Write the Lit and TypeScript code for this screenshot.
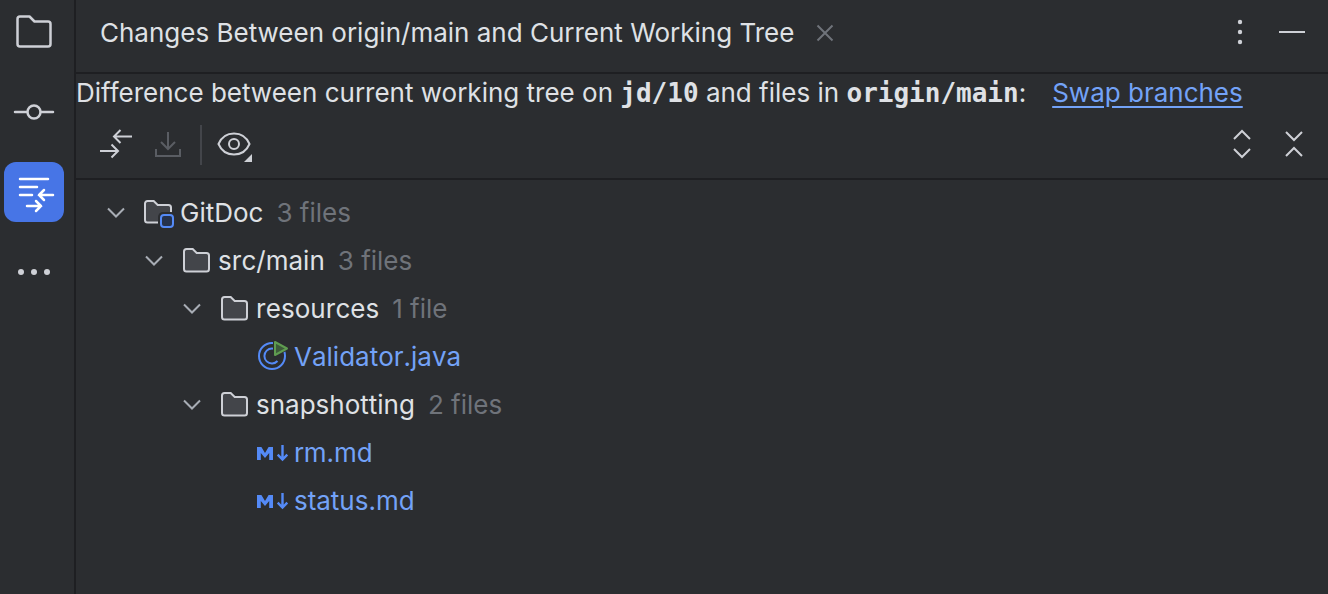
import { LitElement, html, css, svg } from "lit";
import { customElement } from "lit/decorators.js";

type Row = {
  depth: number;
  icon: "module" | "folder" | "java" | "md";
  name: string;
  count?: string;
  changed?: boolean;
};

const rows: Row[] = [
  { depth: 0, icon: "module", name: "GitDoc", count: "3 files" },
  { depth: 1, icon: "folder", name: "src/main", count: "3 files" },
  { depth: 2, icon: "folder", name: "resources", count: "1 file" },
  { depth: 3, icon: "java", name: "Validator.java", changed: true },
  { depth: 2, icon: "folder", name: "snapshotting", count: "2 files" },
  { depth: 3, icon: "md", name: "rm.md", changed: true },
  { depth: 3, icon: "md", name: "status.md", changed: true },
];

const treeIcons = {
  module: svg`
    <path d="M1 6.500A2.500 2.500 0 0 1 3.500 4h6.200l4 4h10.800A2.500 2.500 0 0 1 27 10.500V23a2.500 2.500 0 0 1-2.500 2.500h-21A2.500 2.500 0 0 1 1 23Z" fill="#43454a" stroke="#ced0d6" stroke-width="2"/>
    <rect x="14" y="15" width="18" height="18" rx="5" fill="#2b2d30"/>
    <rect x="17" y="18" width="12" height="12" rx="3" fill="#25324d" stroke="#548af7" stroke-width="2"/>`,
  folder: svg`
    <path d="M2 6.500A2.500 2.500 0 0 1 4.500 4h6.200l4 4h9.800A2.500 2.500 0 0 1 27 10.500V24a2.500 2.500 0 0 1-2.500 2.500h-20A2.500 2.500 0 0 1 2 24Z" fill="#43454a" stroke="#ced0d6" stroke-width="2"/>`,
  java: svg`
    <circle cx="14" cy="15" r="13" fill="none" stroke="#548af7" stroke-width="2"/>
    <path d="M19.500 20a7.500 7.500 0 1 1 0-10" fill="none" stroke="#548af7" stroke-width="2"/>
    <path d="M15 -2 32 8 15 17Z" fill="#2b2d30"/>
    <path d="M17 1v13l12-6.500Z" fill="#3d5a3a" stroke="#5f9c50" stroke-width="2" stroke-linejoin="round"/>`,
  md: svg`
    <path d="M-1 23V10h4.400L7 16l3.600-6H15v13h-3.800v-7L7 21l-4.200-5v7Z" fill="#548af7"/>
    <path d="M24.500 8V22.500M19.700 17.700l4.800 4.800 4.800-4.800" fill="none" stroke="#548af7" stroke-width="2.400"/>`,
};

@customElement("app-root")
export class AppRoot extends LitElement {
  static override styles = css`
    :host {
      display: flex;
      width: 1328px;
      height: 594px;
      overflow: hidden;
      background: #2b2d30;
      color: #dfe1e5;
      font-family: Inter, "Liberation Sans", sans-serif;
      font-size: 26px;
    }

    svg {
      display: block;
      flex: none;
      overflow: visible;
    }

    .sidebar {
      width: 76px;
      flex: none;
      box-sizing: border-box;
      padding: 2px 0 0 4px;
      display: flex;
      flex-direction: column;
      gap: 20px;
      border-right: 2px solid #1e1f22;
    }

    .side-btn {
      width: 60px;
      height: 60px;
      border-radius: 12px;
      display: flex;
      align-items: center;
      justify-content: center;
    }

    .side-btn.active {
      background: #4775e6;
    }

    .main {
      flex: 1;
      min-width: 0;
      display: flex;
      flex-direction: column;
    }

    .header {
      height: 72px;
      flex: none;
      display: flex;
      align-items: center;
      padding: 0 23px 8px 24px;
      box-sizing: border-box;
    }

    .title {
      white-space: nowrap;
    }

    .close {
      margin: 2px 0 0 21px;
    }

    .spacer {
      flex: 1;
    }

    .more {
      margin-right: 36px;
    }

    .rule {
      height: 2px;
      flex: none;
      background: #1e1f22;
    }

    .notice {
      height: 38px;
      flex: none;
      line-height: 38px;
      white-space: pre;
    }

    .notice b {
      font-family: "DejaVu Sans Mono", "Liberation Mono", monospace;
      font-weight: 700;
    }

    .notice a {
      color: #73a2f7;
      text-decoration: underline;
      text-underline-offset: 4px;
      margin-left: 26px;
    }

    .toolbar {
      height: 66px;
      flex: none;
      display: flex;
      align-items: center;
      padding: 0 14px 0 20px;
      box-sizing: border-box;
    }

    .tool {
      width: 40px;
      height: 40px;
      display: flex;
      align-items: center;
      justify-content: center;
    }

    .tool + .tool {
      margin-left: 12px;
    }

    .sep {
      width: 2px;
      height: 40px;
      background: #43454a;
      margin: 0 12px;
    }

    .tree {
      padding-top: 9px;
      font-kerning: none;
    }

    .row {
      height: 48px;
      display: flex;
      align-items: center;
      white-space: nowrap;
    }

    .chevron {
      width: 24px;
      flex: none;
      margin-right: 16px;
    }

    .row-icon {
      margin-right: 4px;
    }

    .label {
      margin-bottom: 1px;
    }

    .changed {
      color: #73a2f7;
    }

    .count {
      color: #6f737a;
      margin-left: 13px;
    }
  `;

  private renderRow(row: Row) {
    return html`
      <div class="row" style="padding-left: ${28 + row.depth * 38}px">
        <div class="chevron">
          ${row.changed
            ? ""
            : html`<svg width="24" height="24" viewBox="0 0 24 24" fill="none" stroke="#a8adb5" stroke-width="2">
                <path d="M4 7.500l8 8 8-8" />
              </svg>`}
        </div>
        <svg class="row-icon" width="32" height="32" viewBox="0 0 32 32">${treeIcons[row.icon]}</svg>
        <span class="label ${row.changed ? "changed" : ""}">${row.name}</span>
        ${row.count ? html`<span class="label count">${row.count}</span>` : ""}
      </div>
    `;
  }

  override render() {
    return html`
      <nav class="sidebar">
        <div class="side-btn">
          <svg width="40" height="40" viewBox="0 0 40 40" fill="none" stroke="#ced0d6" stroke-width="2.500">
            <path d="M3.500 7A2.500 2.500 0 0 1 6 4.500h9.500l5 5H34a2.500 2.500 0 0 1 2.500 2.500v20a2.500 2.500 0 0 1-2.500 2.500H6A2.500 2.500 0 0 1 3.500 32Z" stroke-linejoin="round" />
          </svg>
        </div>
        <div class="side-btn">
          <svg width="40" height="40" viewBox="0 0 40 40" fill="none" stroke="#ced0d6" stroke-width="2.500">
            <circle cx="20" cy="20" r="6.500" />
            <path d="M1 20h12M27 20h12" stroke-linecap="round" />
          </svg>
        </div>
        <div class="side-btn active">
          <svg width="40" height="40" viewBox="0 0 40 40" fill="none" stroke="#fff" stroke-width="2.500" stroke-linecap="round">
            <path d="M6 7h28M6 15h17M6 23h12" />
            <path d="M39 23H25M30 18l-5 5 5 5" />
            <path d="M13 34h14M22 29l5 5-5 5" />
          </svg>
        </div>
        <div class="side-btn">
          <svg width="40" height="12" viewBox="0 0 40 12" fill="#ced0d6">
            <circle cx="7" cy="6" r="3" />
            <circle cx="20" cy="6" r="3" />
            <circle cx="33" cy="6" r="3" />
          </svg>
        </div>
      </nav>

      <div class="main">
        <header class="header">
          <span class="title">Changes Between origin/main and Current Working Tree</span>
          <svg class="close" width="20" height="20" viewBox="0 0 20 20" fill="none" stroke="#6f737a" stroke-width="2">
            <path d="M2.500 2.500l15 15M17.500 2.500l-15 15" />
          </svg>
          <span class="spacer"></span>
          <svg class="more" width="6" height="26" viewBox="0 0 6 26" fill="#ced0d6">
            <circle cx="3" cy="3" r="2.200" />
            <circle cx="3" cy="13" r="2.200" />
            <circle cx="3" cy="23" r="2.200" />
          </svg>
          <svg width="26" height="2" viewBox="0 0 26 2"><rect width="26" height="2" fill="#ced0d6" /></svg>
        </header>
        <div class="rule"></div>

        <div class="notice">Difference between current working tree on <b>jd/10</b> and files in <b>origin/main</b>:<a>Swap branches</a></div>

        <div class="toolbar">
          <div class="tool">
            <svg width="36" height="36" viewBox="0 0 36 36" fill="none" stroke="#ced0d6" stroke-width="2">
              <path d="M34 9.500H16M22.500 3l-6.500 6.500 6.500 6.500" />
              <path d="M2 24h18M13.500 17.500l6.500 6.500-6.500 6.500" />
            </svg>
          </div>
          <div class="tool">
            <svg width="28" height="28" viewBox="0 0 28 28" fill="none" stroke="#5a5d63" stroke-width="2">
              <path d="M14 1v17M7 11l7 7 7-7" />
              <path d="M2 18v7h24v-7" />
            </svg>
          </div>
          <div class="sep"></div>
          <div class="tool">
            <svg width="40" height="40" viewBox="0 0 40 40" fill="none" stroke="#ced0d6" stroke-width="2">
              <path d="M4.500 19c3-7 9-10.500 15.500-10.500S32.500 12 35.500 19c-3 7-9 10.500-15.500 10.500S7.500 26 4.500 19Z" />
              <circle cx="20" cy="19" r="5" />
              <path d="M38 29v8h-8Z" fill="#ced0d6" stroke="none" />
            </svg>
          </div>
          <span class="spacer"></span>
          <div class="tool">
            <svg width="20" height="32" viewBox="0 0 20 32" fill="none" stroke="#ced0d6" stroke-width="2">
              <path d="M2 10l8-8 8 8M2 20l8 8 8-8" />
            </svg>
          </div>
          <div class="tool">
            <svg width="20" height="32" viewBox="0 0 20 32" fill="none" stroke="#ced0d6" stroke-width="2">
              <path d="M2 3l8 8 8-8M2 27l8-8 8 8" />
            </svg>
          </div>
        </div>
        <div class="rule"></div>

        <div class="tree">${rows.map((row) => this.renderRow(row))}</div>
      </div>
    `;
  }
}
